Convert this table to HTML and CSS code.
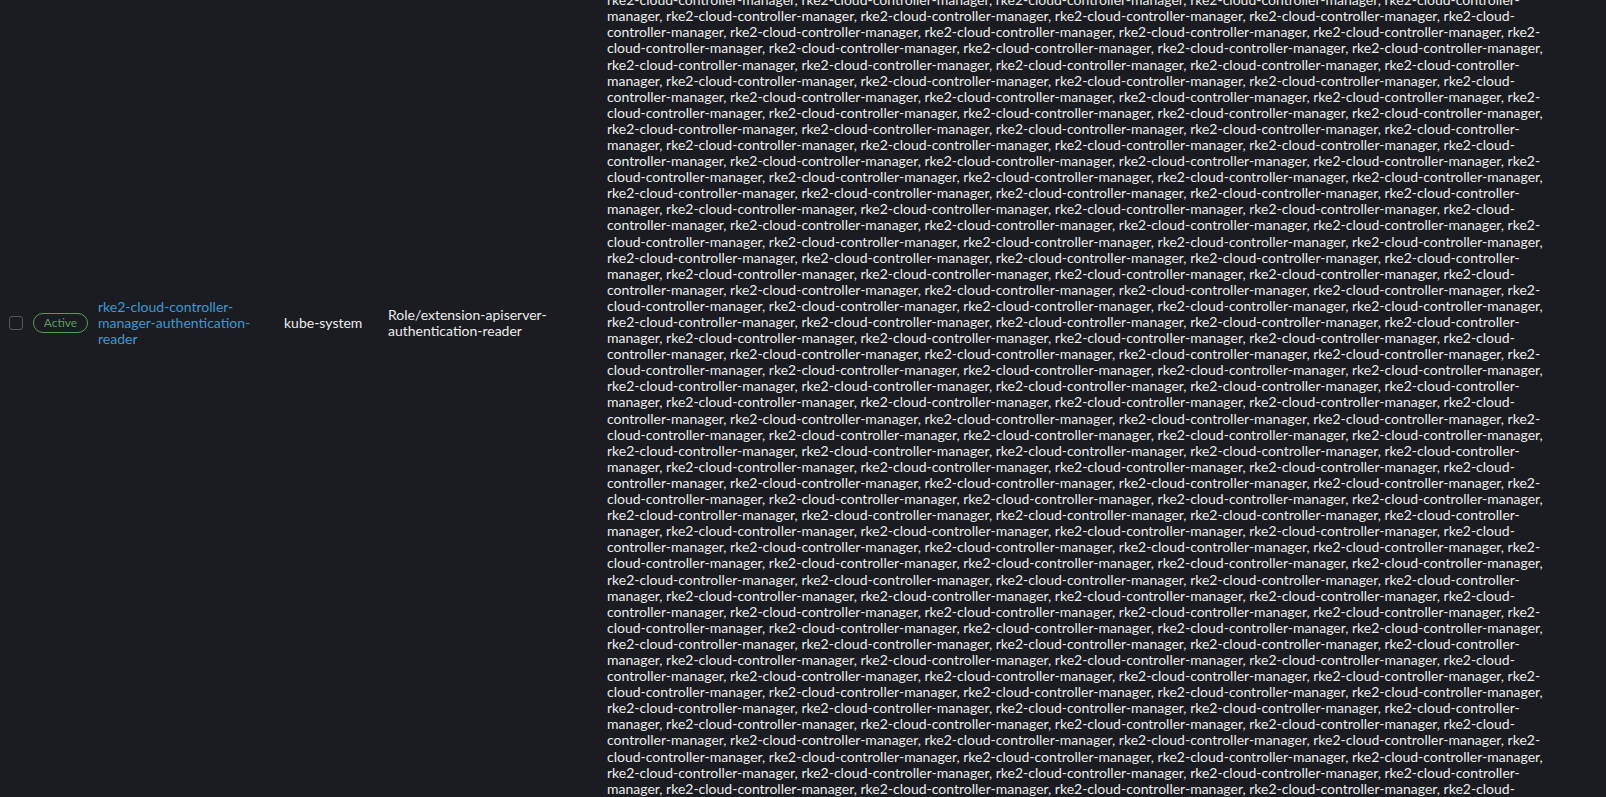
FILE: index.html
```html
<!DOCTYPE html>
<html>
<head>
<meta charset="utf-8">
<link rel="stylesheet" href="styles.css">
</head>
<body>
<div class="table">
  <div class="row">
    <div class="cell cell-check"><span class="checkbox"></span></div>
    <div class="cell cell-state"><span class="badge">Active</span></div>
    <div class="cell cell-name"><a class="link" href="#">rke2-cloud-controller-manager-authentication-reader</a></div>
    <div class="cell cell-ns">kube-system</div>
    <div class="cell cell-role">Role/extension-apiserver-authentication-reader</div>
    <div class="cell cell-subjects" id="subjects"></div>
  </div>
</div>
<script src="app.js"></script>
</body>
</html>
```
FILE: app.js
```js
var items = [];
for (var i = 0; i < 308; i++) items.push('rke2-cloud-controller-manager');
document.getElementById('subjects').textContent = items.join(', ');
```
FILE: styles.css
```css
html, body {
  margin: 0;
  padding: 0;
  background: #1b1c21;
  overflow: hidden;
  height: 100%;
}
body {
  font-family: Lato, "Noto Sans", sans-serif;
  font-size: 14px;
  line-height: 1.15;
  color: #ececec;
}
.table {
  margin-top: -201px;
}
.row {
  display: grid;
  grid-template-columns: 33px 65px 186px 104px 219px 948px;
  align-items: center;
}
.cell-check {
  padding-left: 9px;
  display: flex;
  align-items: center;
}
.checkbox {
  width: 12px;
  height: 12px;
  border: 1px solid #55565c;
  border-radius: 3px;
  background: #1b1c21;
}
.badge {
  display: inline-block;
  box-sizing: border-box;
  width: 55px;
  height: 20px;
  border: 1px solid #5d995d;
  border-radius: 10px;
  color: #5d995d;
  font-size: 12px;
  line-height: 18px;
  text-align: center;
}
.cell-name {
  padding-right: 20px;
}
.link {
  color: #3d98d3;
  text-decoration: none;
}
.cell-role {
  padding-right: 20px;
}
.cell-subjects {
  padding-bottom: 2px;
}
```
